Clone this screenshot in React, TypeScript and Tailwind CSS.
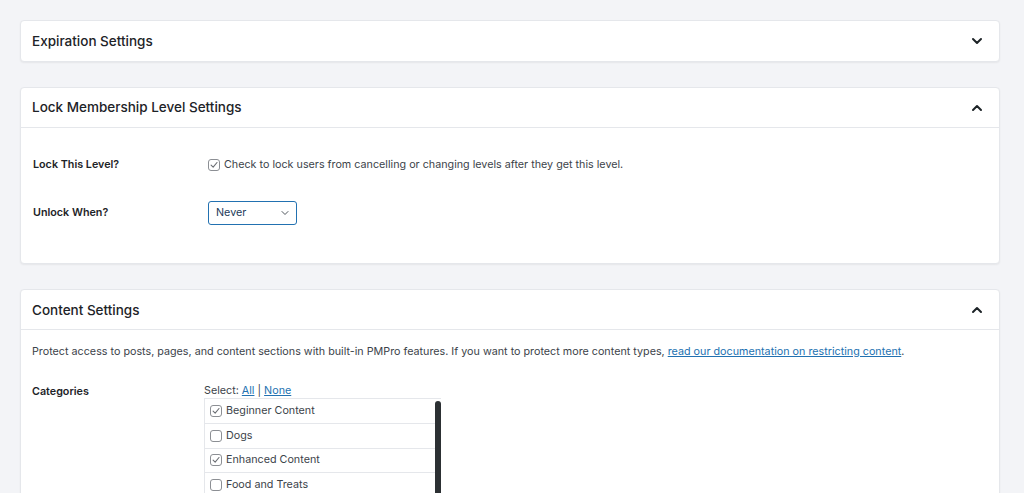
import { ChevronDown, ChevronUp } from 'lucide-react';

const font = { fontFamily: 'Inter, "Liberation Sans", sans-serif' };

const Check = ({ checked }: { checked: boolean }) => (
  <span className="flex h-[12px] w-[12px] shrink-0 items-center justify-center rounded-[3px] border border-[#8c8f94] bg-white">
    {checked && (
      <svg viewBox="0 0 12 12" className="h-[10px] w-[10px]">
        <path d="M2.5 6.2 L5 8.6 L9.6 3" fill="none" stroke="#6b6e73" strokeWidth="1.3" strokeLinecap="round" strokeLinejoin="round" />
      </svg>
    )}
  </span>
);

const PanelHeader = ({ title, open }: { title: string; open: boolean }) => (
  <div className={`flex h-[40px] items-center justify-between pl-[11px] pr-[14px] ${open ? 'border-b border-[#e5e7eb]' : ''}`}>
    <h2 className="text-[13.5px] font-medium text-[#1d2327]">{title}</h2>
    {open ? (
      <ChevronUp className="h-[16px] w-[16px] text-[#1d2327]" strokeWidth={3} />
    ) : (
      <ChevronDown className="h-[16px] w-[16px] text-[#1d2327]" strokeWidth={3} />
    )}
  </div>
);

const categories = [
  { name: 'Beginner Content', checked: true },
  { name: 'Dogs', checked: false },
  { name: 'Enhanced Content', checked: true },
  { name: 'Food and Treats', checked: false },
];

export default function App() {
  return (
    <div className="h-[493px] overflow-hidden bg-[#f3f4f7] pl-[20px] pr-[24px] pt-[20px]" style={font}>
      <div className="flex flex-col gap-[25px]">
        <section className="rounded-[4px] border border-[#e5e7eb] bg-white shadow-[0_1px_2px_rgba(0,0,0,0.06)]">
          <PanelHeader title="Expiration Settings" open={false} />
        </section>

        <section className="rounded-[4px] border border-[#e5e7eb] bg-white shadow-[0_1px_2px_rgba(0,0,0,0.06)]">
          <PanelHeader title="Lock Membership Level Settings" open={true} />
          <div className="flex flex-col gap-[28px] px-[12px] pb-[38px] pt-[29px] text-[10.75px] text-[#1d2327]">
            <div className="flex items-center">
              <div className="w-[175px] font-semibold">Lock This Level?</div>
              <label className="flex items-center gap-[4px] text-[10.75px] text-[#3c434a]">
                <Check checked={true} />
                Check to lock users from cancelling or changing levels after they get this level.
              </label>
            </div>
            <div className="flex items-center">
              <div className="w-[175px] font-semibold">Unlock When?</div>
              <div className="flex h-[24px] w-[89px] items-center justify-between rounded-[3px] border border-[#2271b1] pl-[7px] pr-[5px] text-[10.75px] text-[#1d3b5a]">
                <span>Never</span>
                <ChevronDown className="h-[12px] w-[12px] text-[#50575e]" strokeWidth={2} />
              </div>
            </div>
          </div>
        </section>

        <section className="rounded-[4px] border border-[#e5e7eb] bg-white shadow-[0_1px_2px_rgba(0,0,0,0.06)]">
          <PanelHeader title="Content Settings" open={true} />
          <div className="px-[11px] pt-[14px] text-[10.75px] text-[#3c434a]">
            <p>
              Protect access to posts, pages, and content sections with built-in PMPro features. If you want to protect more content types,{' '}
              <a href="#" className="text-[#2271b1] underline">read our documentation on restricting content</a>.
            </p>
            <div className="mt-[23px] flex">
              <div className="w-[172px] pt-[1px] font-semibold text-[#1d2327]">Categories</div>
              <div className="flex flex-col">
                <div className="leading-[15px]">
                  Select: <a href="#" className="text-[#2271b1] underline">All</a> |{' '}
                  <a href="#" className="text-[#2271b1] underline">None</a>
                </div>
                <div className="flex w-[237px] border-l border-t border-[#e5e7eb]">
                  <div className="flex-1">
                    {categories.map((c) => (
                      <div key={c.name} className="flex h-[24.7px] items-center gap-[4px] border-b border-[#e5e7eb] pl-[5px] text-[10.75px] text-[#3c434a]">
                        <Check checked={c.checked} />
                        {c.name}
                      </div>
                    ))}
                  </div>
                  <div className="mt-[2px] w-[6px] rounded-t-full bg-[#2c3033]" />
                </div>
              </div>
            </div>
          </div>
        </section>
      </div>
    </div>
  );
}
